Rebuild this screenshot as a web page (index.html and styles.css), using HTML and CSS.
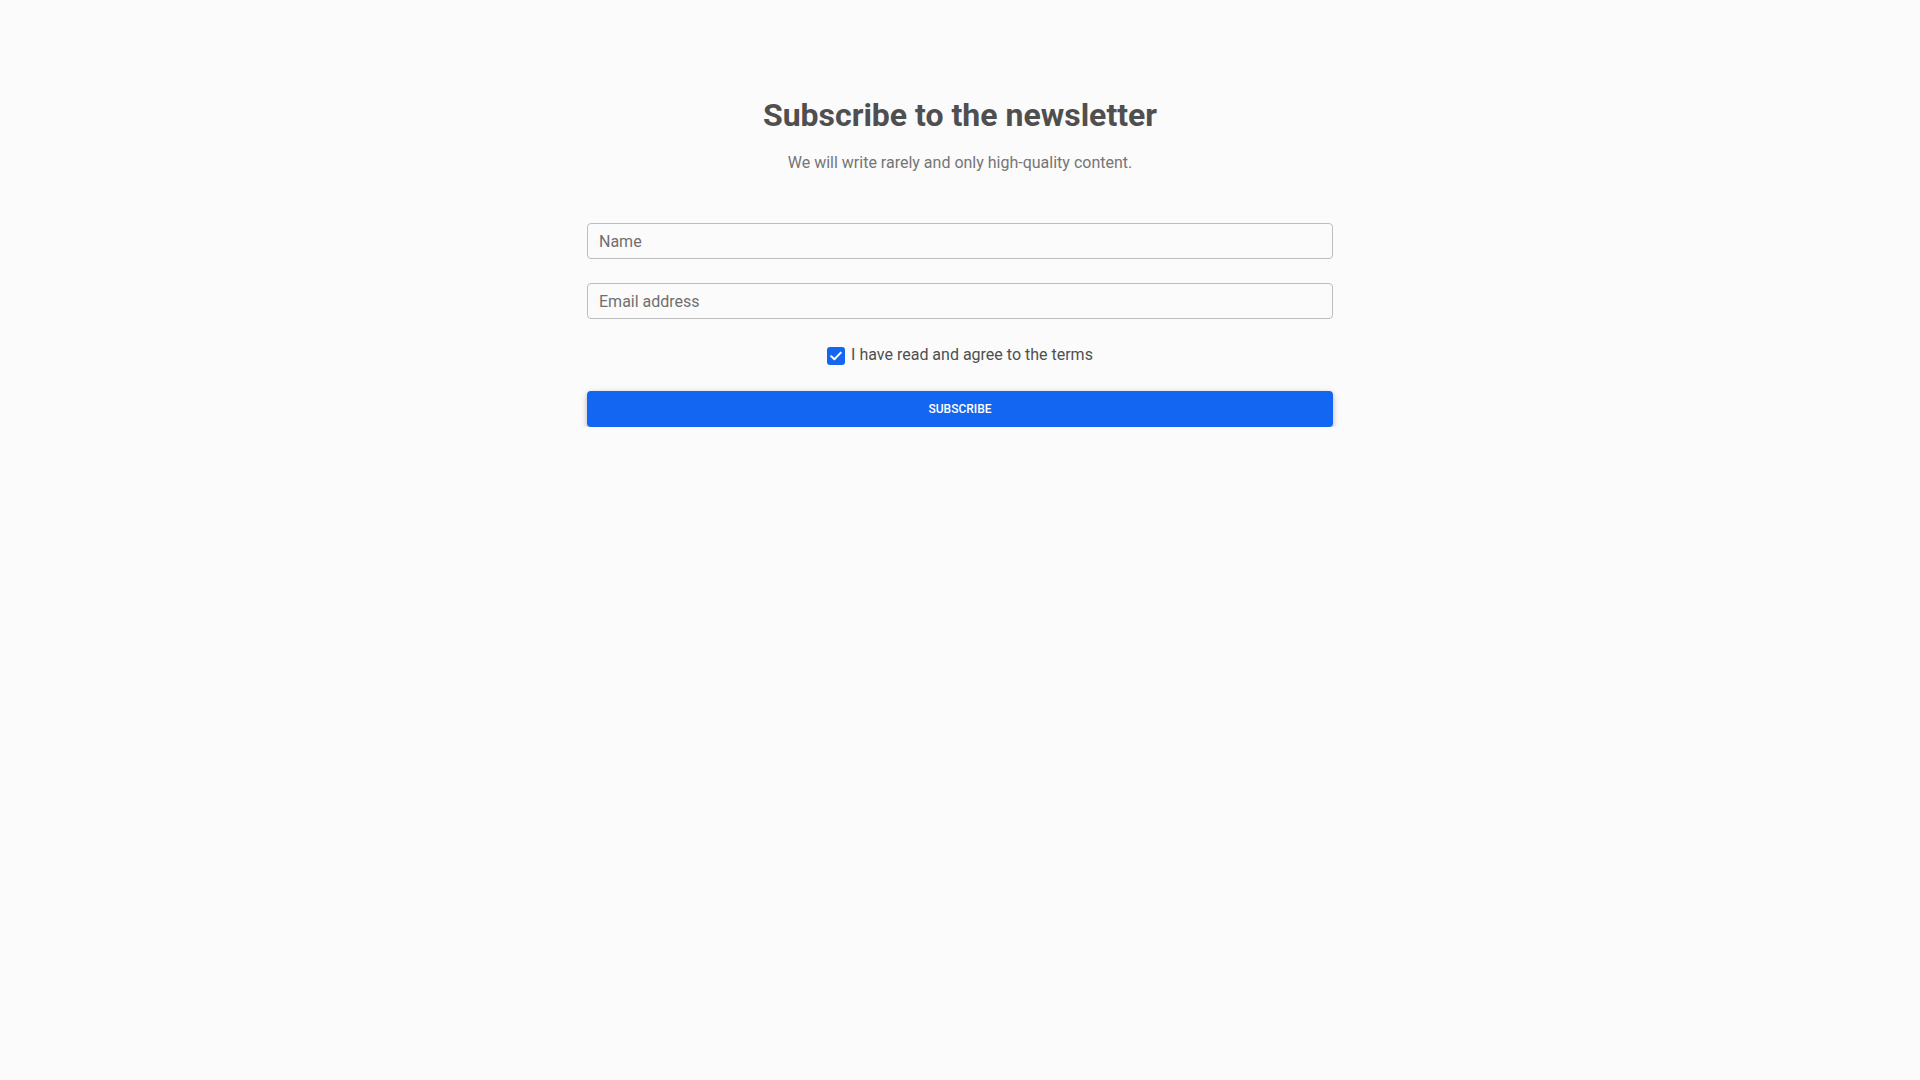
FILE: index.html
```html
<!DOCTYPE html>
<html lang="en">
<head>
    <meta charset="UTF-8">
    <title>Newsletter</title>
    <link rel="stylesheet" href="styles.css">
</head>
<body>
<div class="subscribe">
    <h3 class="subscribe-title">Subscribe to the newsletter</h3>
    <p class="subscribe-lead">We will write rarely and only high-quality content.</p>

    <form class="subscribe-form">
        <input class="field" type="text" placeholder="Name">
        <input class="field" type="email" placeholder="Email address">

        <label class="terms">
            <span class="check">
                <svg width="12" height="10" viewBox="0 0 12 10"><path d="M1.2 5.2 L4.4 8.2 L10.8 1.6" fill="none" stroke="#fff" stroke-width="2" stroke-linecap="round" stroke-linejoin="round"/></svg>
            </span>
            I have read and agree to the terms
        </label>

        <button class="btn" type="button">Subscribe</button>
    </form>
</div>
</body>
</html>
```

FILE: styles.css
```css
*{margin: 0; padding: 0; box-sizing: border-box;}
body{
    background-color: #fbfbfb;
    font-family: Roboto, "Liberation Sans", sans-serif;
    color: #4f4f4f;
}
.subscribe{
    width: 746px;
    margin: 0 auto;
    padding-top: 96px;
    text-align: center;
}
.subscribe-title{
    font-size: 32px;
    font-weight: 700;
    line-height: 38.4px;
    color: #4f4f4f;
    margin-bottom: 17px;
}
.subscribe-lead{
    font-size: 16px;
    line-height: 24px;
    color: #757575;
    margin-bottom: 48px;
}
.subscribe-form{
    display: flex;
    flex-direction: column;
    gap: 24px;
}
.field{
    display: block;
    width: 100%;
    height: 36px;
    padding: 0 11px;
    font-family: inherit;
    font-size: 16px;
    color: #4f4f4f;
    background: transparent;
    border: 1px solid #bdbdbd;
    border-radius: 4px;
    outline: none;
}
.field::placeholder{
    color: #6f6f6f;
}
.terms{
    display: flex;
    align-items: center;
    justify-content: center;
    gap: 6px;
    font-size: 16px;
    line-height: 24px;
    color: #4f4f4f;
}
.check{
    display: flex;
    align-items: center;
    justify-content: center;
    width: 18px;
    height: 18px;
    border-radius: 3px;
    background-color: #1266f1;
    margin-top: 1px;
}
.btn{
    display: block;
    width: 100%;
    height: 36px;
    border: 0;
    border-radius: 4px;
    background-color: #1266f1;
    color: #fff;
    font-family: inherit;
    font-size: 12px;
    font-weight: 500;
    text-transform: uppercase;
    box-shadow: 0 2px 5px 0 rgba(0,0,0,.2), 0 2px 10px 0 rgba(0,0,0,.1);
    cursor: pointer;
}
```
